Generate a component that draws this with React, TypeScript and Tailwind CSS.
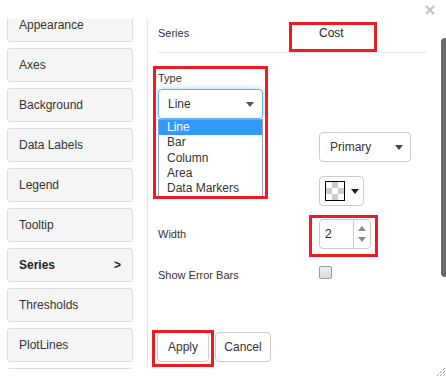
import React from 'react';

const sections = [
  'Appearance',
  'Axes',
  'Background',
  'Data Labels',
  'Legend',
  'Tooltip',
  'Series',
  'Thresholds',
  'PlotLines',
  '',
];

const typeOptions = ['Line', 'Bar', 'Column', 'Area', 'Data Markers'];

function Caret({ className = '' }: { className?: string }) {
  return (
    <svg width="8" height="5" viewBox="0 0 8 5" className={className}>
      <path d="M0 0h8L4 5z" fill="currentColor" />
    </svg>
  );
}

function RedBox({ className }: { className: string }) {
  // annotation rectangle drawn over the form
  return <div className={`absolute border-[3px] border-[#ed1c24] pointer-events-none ${className}`} />;
}

export default function App() {
  return (
    <div className="relative w-[446px] h-[377px] overflow-hidden bg-white flex font-['Liberation_Sans',Arial,sans-serif] text-[#333]">
      {/* Side menu */}
      <div className="w-[148px] shrink-0 mt-[19px] h-[350px] border-r border-[#e5e5e5] overflow-hidden">
        <div className="-mt-[11px] pl-[7px] pr-[14px] flex flex-col gap-[6px]">
          {sections.map((s, i) => (
            <div
              key={i}
              className={`h-[34px] shrink-0 flex items-center justify-between pl-[11px] pr-[11px] bg-[#f5f5f5] border border-[#dddddd] rounded-[3px] text-[12px] ${
                s === 'Series' ? 'font-bold text-[#222]' : ''
              }`}
            >
              <span>{s}</span>
              {s === 'Series' && <span>&gt;</span>}
            </div>
          ))}
        </div>
      </div>

      {/* Series settings */}
      <div className="flex-1 pl-[10px] pr-[19px]">
        <div className="mt-[26px] h-[27px] border-b border-[#e5e5e5] flex leading-[14px]">
          <div className="w-[161px] text-[11px]">Series</div>
          <div className="relative text-[12px] text-[#222]">
            Cost
            <RedBox className="-left-[30px] -top-[4px] w-[88px] h-[30px]" />
          </div>
        </div>

        <div className="relative mt-[18px]">
          <RedBox className="-left-[5px] -top-[5px] w-[115px] h-[133px] z-20" />
          <div className="text-[11px] leading-[14px]">Type</div>
          <div className="relative mt-[4px] w-[105px]">
            <div className="h-[30px] flex items-center justify-between pl-[9px] pr-[8px] border border-[#66afe9] rounded-[4px] shadow-[0_0_5px_rgba(102,175,233,0.6)] text-[12px]">
              <span>Line</span>
              <Caret className="text-[#555]" />
            </div>
            <div className="absolute left-0 top-full w-[105px] h-[79px] z-10 bg-white border border-[#8aa2c8] text-[12px] leading-[15px]">
              {typeOptions.map(o => (
                <div
                  key={o}
                  className={`h-[15.3px] pl-[8px] ${o === 'Line' ? 'bg-[#3399ff] text-white' : 'text-[#333]'}`}
                >
                  {o}
                </div>
              ))}
            </div>
          </div>
        </div>

        {/* axis row: label sits under the open list */}
        <div className="mt-[13px] h-[30px] flex items-center">
          <div className="w-[161px]" />
          <div className="w-[92px] h-[30px] flex items-center justify-between pl-[10px] pr-[7px] border border-[#cccccc] rounded-[4px] text-[12px]">
            <span>Primary</span>
            <Caret className="text-[#444]" />
          </div>
        </div>

        {/* color row */}
        <div className="mt-[14px] h-[30px] flex items-center">
          <div className="w-[161px]" />
          <div className="w-[45px] h-[30px] flex items-center gap-[6px] pl-[5px] border border-[#cccccc] rounded-[4px]">
            <div className="w-[20px] h-[20px] border border-black bg-[image:repeating-conic-gradient(#cccccc_0_25%,#ffffff_0_50%)] bg-[length:12px_12px]" />
            <Caret className="text-[#222]" />
          </div>
        </div>

        <div className="mt-[13px] h-[30px] flex items-center">
          <div className="w-[161px] text-[11px]">Width</div>
          <div className="relative w-[52px] h-[30px] flex border border-[#cccccc] rounded-[4px]">
            <RedBox className="-left-[11px] -top-[5px] w-[69px] h-[42px]" />
            <div className="flex-1 flex items-center pl-[5px] text-[12px] text-[#222]">2</div>
            <div className="w-[17px] border-l border-[#cccccc] flex flex-col items-center justify-center gap-[6px]">
              <Caret className="text-[#888] rotate-180" />
              <Caret className="text-[#888]" />
            </div>
          </div>
        </div>

        <div className="mt-[17px] flex">
          <div className="w-[161px] text-[11px] leading-[14px] pt-[2px]">Show Error Bars</div>
          <div className="w-[13px] h-[13px] rounded-[2px] border border-[#9a9a9a] bg-gradient-to-b from-[#f0f0f0] to-[#dcdcdc]" />
        </div>

        <div className="mt-[50px] flex -ml-[1px]">
          <div className="relative">
            <RedBox className="-left-[5px] -top-[2px] w-[62px] h-[37px]" />
            <button className="w-[52px] h-[30px] border border-[#cccccc] rounded-[4px] bg-white text-[12px] text-[#333]">
              Apply
            </button>
          </div>
          <button className="ml-[6px] w-[56px] h-[30px] border border-[#cccccc] rounded-[4px] bg-white text-[12px] text-[#333]">
            Cancel
          </button>
        </div>
      </div>

      {/* close */}
      <svg className="absolute left-[425px] top-[5px]" width="10" height="10" viewBox="0 0 10 10">
        <path d="M1 1l8 8M9 1l-8 8" stroke="#c4c4c4" strokeWidth="2.4" />
      </svg>

      {/* scrollbar thumb */}
      <div className="absolute left-[441px] top-[38px] w-[8px] h-[239px] rounded-[4px] bg-[#6b6b6b]" />

      {/* resize grip */}
      <svg className="absolute right-0 bottom-0" width="10" height="10" viewBox="0 0 10 10">
        <path d="M9 1L1 9M9 4L4 9M9 7L7 9" stroke="#666" strokeWidth="1" strokeDasharray="1 1" />
      </svg>
    </div>
  );
}
